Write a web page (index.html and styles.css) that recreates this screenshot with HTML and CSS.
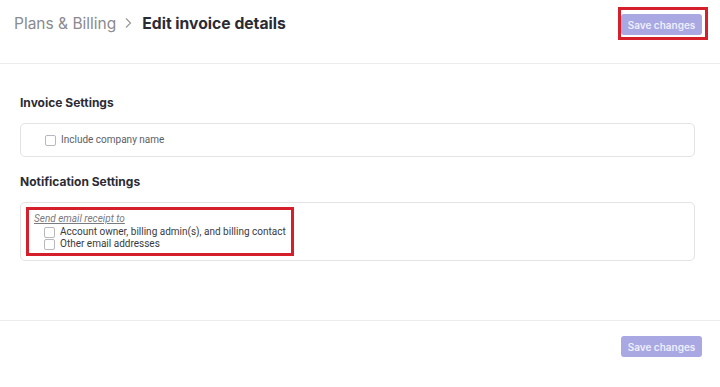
FILE: index.html
```html
<!DOCTYPE html>
<html lang="en">

<head>
    <meta charset="UTF-8">
    <title>Edit invoice details</title>
    <link rel="stylesheet" href="styles.css">
</head>

<body>
    <div class="page">
        <header class="top-bar">
            <div class="crumbs">
                <span class="crumb-parent">Plans &amp; Billing</span>
                <svg class="crumb-sep" width="10" height="12" viewBox="0 0 10 12">
                    <path d="M3 1.5 L7.5 6 L3 10.5" fill="none" stroke="#999" stroke-width="1.2" />
                </svg>
                <span class="crumb-current">Edit invoice details</span>
            </div>
            <div class="marked marked-top">
                <button class="btn-save" disabled>Save changes</button>
            </div>
        </header>

        <main class="content">
            <h2 class="section-title">Invoice Settings</h2>
            <div class="panel panel-invoice">
                <label class="check"><span class="box"></span>Include company name</label>
            </div>

            <h2 class="section-title">Notification Settings</h2>
            <div class="panel panel-notify">
                <div class="marked marked-notify">
                    <div class="legend">Send email receipt to</div>
                    <label class="check dark"><span class="box"></span>Account owner, billing admin(s), and billing contact</label>
                    <label class="check dark"><span class="box"></span>Other email addresses</label>
                </div>
            </div>
        </main>

        <footer class="bottom-bar">
            <button class="btn-save" disabled>Save changes</button>
        </footer>
    </div>
</body>

</html>
```

FILE: styles.css
```css
body,
html {
    margin: 0;
    height: 100%;
    background-color: #fff;
}

body {
    font-family: Inter, "Noto Sans", sans-serif;
    color: #2b2b33;
}

.page {
    display: flex;
    flex-direction: column;
    height: 100%;
}

.top-bar {
    display: flex;
    justify-content: space-between;
    align-items: center;
    height: 64px;
    padding: 0 14px;
    border-bottom: 1px solid #ececec;
    box-sizing: border-box;
}

.crumbs {
    display: flex;
    align-items: center;
    margin-top: -17px;
}

.crumb-parent {
    font-size: 15.5px;
    color: #8a8a8f;
}

.crumb-sep {
    margin: 0 9px 0 7px;
}

.crumb-current {
    font-size: 15.7px;
    font-weight: 700;
    color: #2b2b33;
}

.marked {
    border: 3px solid #d51f2b;
}

.marked-top {
    display: flex;
    padding: 4px 3px 2px 0;
    margin-top: -16px;
    margin-right: -2px;
}

.btn-save {
    width: 81px;
    height: 21px;
    padding: 0;
    border: none;
    border-radius: 3px;
    background-color: #a9a8e3;
    color: #eeeefb;
    font-family: Inter, "Noto Sans", sans-serif;
    font-size: 10px;
    font-weight: 600;
}

.content {
    flex-grow: 1;
    padding: 31px 25px 0 20px;
}

.section-title {
    margin: 0;
    font-size: 12px;
    font-weight: 700;
    color: #2b2b33;
}

.panel {
    border: 1px solid #e3e3e3;
    border-radius: 5px;
    margin: 13px 0 17px;
}

.panel-invoice {
    padding: 10px 24px 10px;
}

.panel-notify {
    padding: 4px 5px 4px;
}

.marked-notify {
    width: 257px;
    padding: 2px 0 3px 5px;
}

.legend {
    font-family: Roboto, sans-serif;
    font-size: 10px;
    font-style: italic;
    text-decoration: underline;
    color: #7a7a80;
    line-height: 14px;
}

.check {
    display: flex;
    align-items: center;
    white-space: nowrap;
    font-family: Roboto, sans-serif;
    font-size: 10px;
    color: #5e5e64;
    line-height: 12px;
}

.check.dark {
    color: #3a3a40;
    margin-left: 10px;
    height: 12px;
}

.box {
    width: 9px;
    height: 9px;
    border: 1px solid #b8b8bc;
    border-radius: 2px;
    margin-right: 5px;
    background: #fff;
}

.bottom-bar {
    display: flex;
    justify-content: flex-end;
    height: 67px;
    padding: 15px 18px 0;
    border-top: 1px solid #ececec;
    box-sizing: border-box;
}
```
